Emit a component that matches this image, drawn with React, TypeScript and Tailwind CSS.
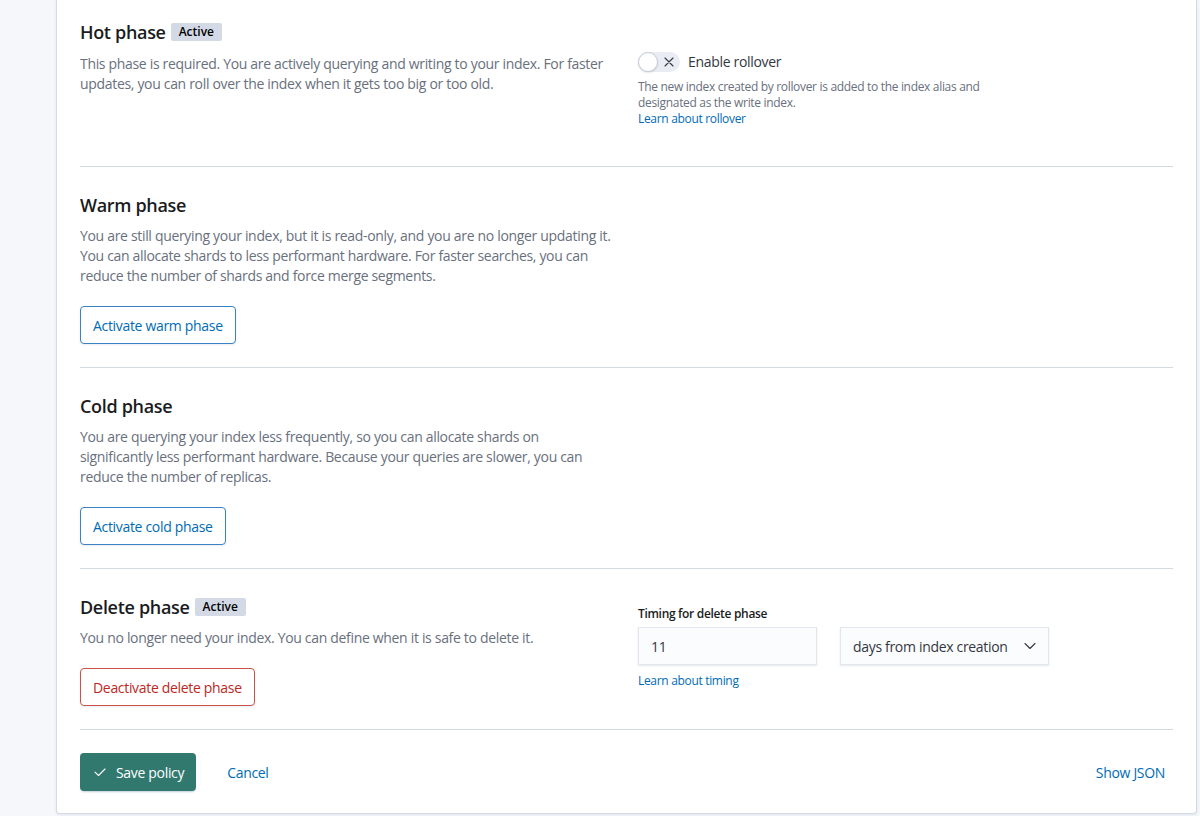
import React from "react";

function Title({ text, badge }: { text: string; badge?: boolean }) {
  return (
    <div className="flex items-center gap-[5px] h-[24px]">
      <h2 className="text-[18px] leading-[24px] font-semibold text-[#1a1c21]">{text}</h2>
      {badge && (
        <span className="h-[18px] px-2 rounded-[2px] bg-[#d3dae6] text-[12px] leading-[18px] font-semibold text-black tracking-normal">
          Active
        </span>
      )}
    </div>
  );
}

function Desc({ children }: { children: React.ReactNode }) {
  return <p className="mt-[9px] text-[14px] leading-[20px] text-[#69707d]">{children}</p>;
}

function Hr() {
  return <div className="h-px bg-[#d3dae6]" />;
}

function OutlineButton({ label, danger }: { label: string; danger?: boolean }) {
  return (
    <button
      className={
        danger
          ? "mt-[20px] h-[38px] px-3 rounded-[4px] border border-[#c9524a] text-[#bd271e] text-[14px] bg-white shadow-[0_1px_2px_rgba(152,162,179,0.2)]"
          : "mt-[20px] h-[38px] px-3 rounded-[4px] border border-[#3a82c4] text-[#006bb4] text-[14px] bg-white shadow-[0_1px_2px_rgba(152,162,179,0.2)]"
      }
    >
      {label}
    </button>
  );
}

export default function App() {
  return (
    <div className="min-h-screen bg-[#f5f7fa] font-['Open_Sans',sans-serif] tracking-[-0.02em] text-[#343741]">
      <div className="ml-[56px] w-[1141px] bg-white border border-t-0 border-[#d3dae6] rounded-b-[4px] shadow-[0_1px_3px_rgba(152,162,179,0.2)] px-[23px] pt-[20px] pb-[22px]">
        {/* Hot phase */}
        <div className="flex pb-[39px]">
          <div className="w-[534px] shrink-0">
            <Title text="Hot phase" badge />
            <p className="mt-[10px] text-[14px] leading-[20px] text-[#69707d]">
              This phase is required. You are actively querying and writing to your index. For faster updates, you
              can roll over the index when it gets too big or too old.
            </p>
          </div>
          <div className="ml-[24px] w-[380px] pt-[32px]">
            <div className="flex items-center h-[20px]">
              <div className="relative w-[42px] h-[20px] rounded-full bg-[#e9edf3]">
                <span className="absolute left-0 top-0 w-[20px] h-[20px] rounded-full bg-white border border-[#c5ccd7] shadow-[0_1px_2px_rgba(0,0,0,0.12)]" />
                <svg
                  className="absolute left-[26px] top-[5px]"
                  width="10"
                  height="10"
                  viewBox="0 0 10 10"
                  fill="none"
                  stroke="#343741"
                  strokeWidth="1.1"
                  strokeLinecap="round"
                >
                  <path d="M1 1L9 9M9 1L1 9" />
                </svg>
              </div>
              <span className="ml-[8px] text-[14px] leading-[20px] text-[#343741]">Enable rollover</span>
            </div>
            <p className="mt-[7px] text-[12px] leading-[16px] text-[#69707d]">
              The new index created by rollover is added to the index alias and designated as the write index.
            </p>
            <a className="block text-[12px] leading-[16px] text-[#006bb4]">Learn about rollover</a>
          </div>
        </div>
        <Hr />

        {/* Warm phase */}
        <div className="pt-[26px] pb-[23px]">
          <div className="w-[534px]">
            <Title text="Warm phase" />
            <Desc>
              You are still querying your index, but it is read-only, and you are no longer updating it. You can
              allocate shards to less performant hardware. For faster searches, you can reduce the number of shards
              and force merge segments.
            </Desc>
            <OutlineButton label="Activate warm phase" />
          </div>
        </div>
        <Hr />

        {/* Cold phase */}
        <div className="pt-[26px] pb-[23px]">
          <div className="w-[534px]">
            <Title text="Cold phase" />
            <Desc>
              You are querying your index less frequently, so you can allocate shards on significantly less
              performant hardware. Because your queries are slower, you can reduce the number of replicas.
            </Desc>
            <OutlineButton label="Activate cold phase" />
          </div>
        </div>
        <Hr />

        {/* Delete phase */}
        <div className="flex pt-[26px] pb-[23px]">
          <div className="w-[534px] shrink-0">
            <Title text="Delete phase" badge />
            <Desc>You no longer need your index. You can define when it is safe to delete it.</Desc>
            <OutlineButton label="Deactivate delete phase" danger />
          </div>
          <div className="ml-[24px] pt-[11px]">
            <label className="block text-[12px] leading-[16px] font-semibold text-[#1a1c21]">
              Timing for delete phase
            </label>
            <div className="mt-[5px] flex gap-[23px]">
              <div className="w-[179px] h-[38px] flex items-center px-3 bg-[#fbfcfd] border border-[#e3e7ed] shadow-[0_1px_2px_rgba(152,162,179,0.25)] text-[14px] text-[#343741]">
                11
              </div>
              <div className="w-[209px] h-[38px] flex items-center justify-between pl-3 pr-[12px] bg-[#fbfcfd] border border-[#e3e7ed] shadow-[0_1px_2px_rgba(152,162,179,0.25)] text-[14px] text-[#343741]">
                <span>days from index creation</span>
                <svg width="12" height="12" viewBox="0 0 12 12" fill="none" stroke="#343741" strokeWidth="1.1" strokeLinecap="round" strokeLinejoin="round">
                  <path d="M1 3.5L6 8.5L11 3.5" />
                </svg>
              </div>
            </div>
            <a className="block mt-[8px] text-[12px] leading-[16px] text-[#006bb4]">Learn about timing</a>
          </div>
        </div>
        <Hr />

        {/* Footer */}
        <div className="pt-[23px] flex items-center justify-between">
          <div className="flex items-center">
            <button className="h-[38px] px-3 flex items-center gap-[8px] rounded-[4px] bg-[#31796f] text-white text-[14px] shadow-[0_2px_2px_-1px_rgba(54,97,126,0.3)]">
              <svg width="16" height="16" viewBox="0 0 16 16" fill="none" stroke="white" strokeWidth="1.1" strokeLinecap="round" strokeLinejoin="round">
                <path d="M3 8.2L6.5 11.5L13 5" />
              </svg>
              <span>Save policy</span>
            </button>
            <a className="ml-[31px] text-[14px] text-[#006bb4]">Cancel</a>
          </div>
          <a className="mr-[8px] text-[14px] text-[#006bb4]">Show JSON</a>
        </div>
      </div>
    </div>
  );
}
